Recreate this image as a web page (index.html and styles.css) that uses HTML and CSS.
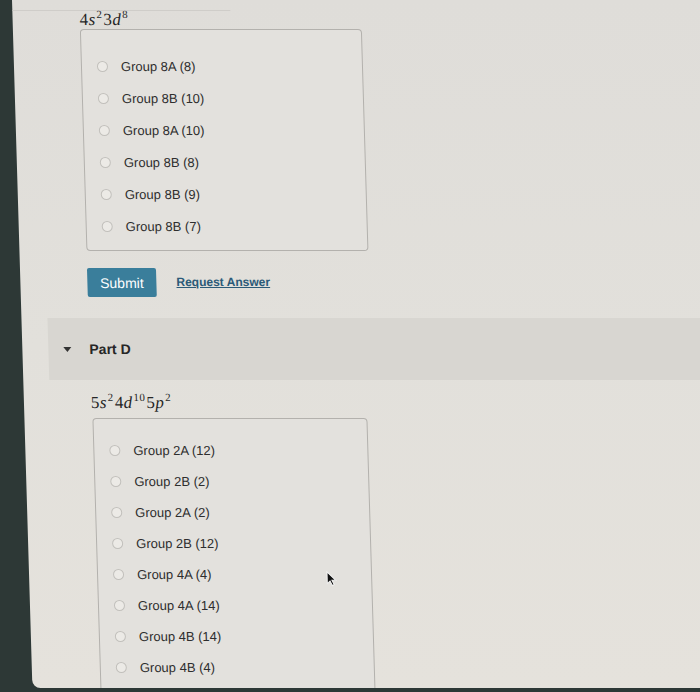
FILE: index.html
```html
<!DOCTYPE html>
<html>
<head>
<meta charset="utf-8">
<link rel="stylesheet" href="styles.css">
</head>
<body>
<div class="screen">
  <div class="topline"></div>
  <div class="formula"><span class="n">4</span><i>s</i><sup>2</sup><span class="n">3</span><i>d</i><sup>8</sup></div>
  <div class="choices choices-c">
    <label class="opt"><span class="radio"></span>Group 8A (8)</label>
    <label class="opt"><span class="radio"></span>Group 8B (10)</label>
    <label class="opt"><span class="radio"></span>Group 8A (10)</label>
    <label class="opt"><span class="radio"></span>Group 8B (8)</label>
    <label class="opt"><span class="radio"></span>Group 8B (9)</label>
    <label class="opt"><span class="radio"></span>Group 8B (7)</label>
  </div>
  <div class="actions">
    <button class="submit">Submit</button>
    <a class="request">Request Answer</a>
  </div>
  <div class="part-band">
    <span class="caret"></span>
    <span class="part-title">Part D</span>
  </div>
  <div class="formula formula-d"><span class="n">5</span><i>s</i><sup>2</sup><span class="n">4</span><i>d</i><sup>10</sup><span class="n">5</span><i>p</i><sup>2</sup></div>
  <div class="choices choices-d">
    <label class="opt opt-d"><span class="radio"></span>Group 2A (12)</label>
    <label class="opt opt-d"><span class="radio"></span>Group 2B (2)</label>
    <label class="opt opt-d"><span class="radio"></span>Group 2A (2)</label>
    <label class="opt opt-d"><span class="radio"></span>Group 2B (12)</label>
    <label class="opt opt-d"><span class="radio"></span>Group 4A (4)</label>
    <label class="opt opt-d"><span class="radio"></span>Group 4A (14)</label>
    <label class="opt opt-d"><span class="radio"></span>Group 4B (14)</label>
    <label class="opt opt-d"><span class="radio"></span>Group 4B (4)</label>
  </div>
  <svg class="cursor" width="12" height="16" viewBox="0 0 12 16">
    <path d="M1 1 L1 12.5 L3.8 10 L6 14.5 L7.8 13.6 L5.7 9.3 L9.6 9.3 Z" fill="#111" stroke="#f4f4f4" stroke-width="1"/>
  </svg>
</div>
</body>
</html>
```
FILE: styles.css
```css
html, body {
  margin: 0;
  padding: 0;
}
body {
  width: 700px;
  height: 692px;
  overflow: hidden;
  background: #2d3836;
  font-family: "Liberation Sans", Arial, sans-serif;
  color: #2b2b2b;
}
.screen {
  position: relative;
  margin-left: 12px;
  width: 688px;
  height: 688px;
  overflow: hidden;
  background: linear-gradient(180deg, #dfddd9 0%, #e2e0db 50%, #e5e2dc 100%);
  transform: skewX(1.7deg);
  transform-origin: 0 0;
  border-bottom-left-radius: 8px;
}
.topline {
  width: 218px;
  height: 10px;
  border-bottom: 1px solid #cfcdc9;
}
.formula {
  margin-left: 67px;
  height: 18px;
  font-family: "Liberation Serif", "DejaVu Serif", serif;
  font-size: 17px;
  line-height: 18px;
  letter-spacing: 0.4px;
  color: #262626;
  white-space: nowrap;
}
.formula i {
  font-style: italic;
}
.formula sup {
  font-size: 11px;
  line-height: 0;
  vertical-align: 0;
  position: relative;
  top: -7px;
  margin-left: 1px;
  margin-right: 1px;
}
.choices {
  box-sizing: border-box;
  border: 1px solid #b3b1ad;
  border-radius: 4px;
  display: flex;
  flex-direction: column;
  background: #e3e1dd;
}
.choices-c {
  margin-left: 67px;
  width: 282px;
  height: 222px;
  padding: 21px 0 8px 15px;
}
.opt {
  height: 32px;
  display: flex;
  align-items: center;
  gap: 13px;
  font-size: 13px;
  color: #2e2e2e;
}
.opt-d {
  height: 31px;
}
.radio {
  box-sizing: border-box;
  width: 11px;
  height: 11px;
  border-radius: 50%;
  border: 1px solid #c2c0bc;
  background: #eceae6;
  flex: none;
}
.actions {
  margin-top: 17px;
  margin-left: 67px;
  display: flex;
  align-items: center;
  gap: 20px;
}
.submit {
  width: 69px;
  height: 29px;
  border: none;
  border-radius: 2px;
  background: #3a7e9b;
  color: #ffffff;
  font-family: "Liberation Sans", Arial, sans-serif;
  font-size: 14px;
  padding: 0;
}
.request {
  font-size: 12px;
  font-weight: bold;
  color: #2b5a78;
  text-decoration: underline;
  margin-top: -2px;
}
.part-band {
  margin-top: 21px;
  margin-left: 26px;
  height: 62px;
  background: #d8d6d1;
  display: flex;
  align-items: center;
}
.caret {
  margin-left: 15px;
  width: 0;
  height: 0;
  border-left: 4.5px solid transparent;
  border-right: 4.5px solid transparent;
  border-top: 5px solid #333;
}
.part-title {
  margin-left: 18px;
  font-size: 14px;
  font-weight: bold;
  color: #262626;
}
.formula-d {
  margin-top: 14px;
}
.choices-d {
  margin-top: 6px;
  margin-left: 68px;
  width: 275px;
  padding: 16px 0 8px 15px;
}
.cursor {
  position: absolute;
  left: 297px;
  top: 571px;
}
```
